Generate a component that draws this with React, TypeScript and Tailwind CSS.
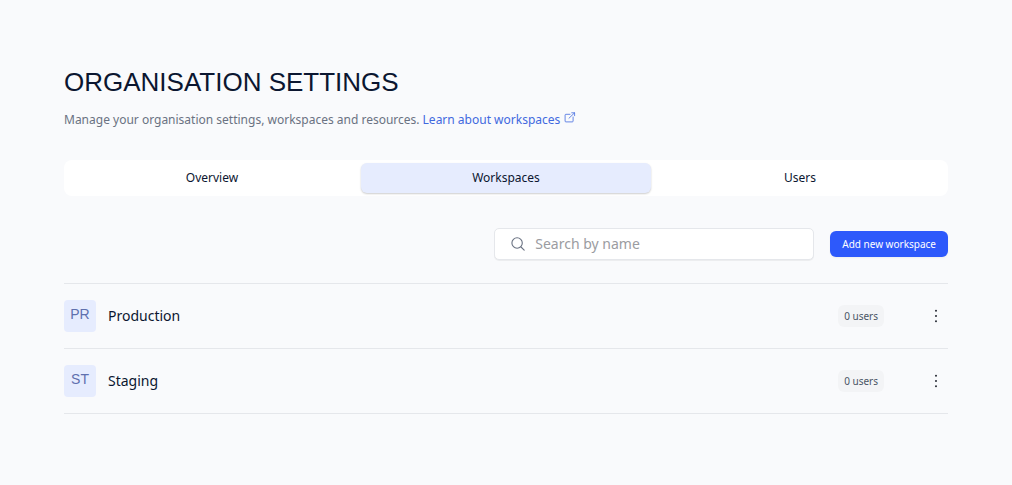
import { useState } from "react";

const tabs = ["Overview", "Workspaces", "Users"];

const workspaces = [
  { name: "Production", initials: "PR", users: 0 },
  { name: "Staging", initials: "ST", users: 0 },
];

function ExternalIcon() {
  return (
    <svg viewBox="0 0 12 12" className="mb-1 size-3 shrink-0" fill="none" stroke="currentColor" strokeWidth="0.8" strokeLinecap="round" strokeLinejoin="round" aria-hidden="true">
      <path d="M6 2.3H1.9a.8.8 0 0 0-.8.8v6a.8.8 0 0 0 .8.8h6.4a.8.8 0 0 0 .8-.8V5" />
      <path d="M5 6.2 10.6.8M7.7.8h2.9v2.9" />
    </svg>
  );
}

function SearchIcon() {
  return (
    <svg viewBox="0 0 16 16" className="size-4 shrink-0 text-gray-500" fill="none" stroke="currentColor" strokeWidth="1.1" strokeLinecap="round" aria-hidden="true">
      <circle cx="7.1" cy="7" r="5.2" />
      <path d="m11 11 3.2 3.2" />
    </svg>
  );
}

function DotsIcon() {
  return (
    <svg viewBox="0 0 16 16" className="size-4" fill="currentColor" aria-hidden="true">
      <circle cx="8" cy="2.7" r="1.05" />
      <circle cx="8" cy="8" r="1.05" />
      <circle cx="8" cy="13.3" r="1.05" />
    </svg>
  );
}

export default function App() {
  const [active, setActive] = useState("Workspaces");
  const [query, setQuery] = useState("");
  const rows = workspaces.filter((w) => w.name.toLowerCase().includes(query.toLowerCase()));

  return (
    <div className="min-h-screen bg-[#f9fafc] px-16 py-16 font-['Noto_Sans',sans-serif] text-[#0b1630]">
      <header>
        <h1 className="font-['Liberation_Sans',sans-serif] text-[26px] leading-9">ORGANISATION SETTINGS</h1>
        <p className="mt-2 flex items-center text-xs leading-6 text-gray-500">
          <span>Manage your organisation settings, workspaces and resources.</span>
          <a href="#workspaces" className="ml-[3px] flex items-center gap-1 text-[#4169df]">
            Learn about workspaces
            <ExternalIcon />
          </a>
        </p>
      </header>

      <div role="tablist" className="mt-7 grid grid-cols-3 gap-1 rounded-lg bg-white p-[3px]">
        {tabs.map((tab) => (
          <button
            key={tab}
            role="tab"
            type="button"
            aria-selected={active === tab}
            onClick={() => setActive(tab)}
            className={
              active === tab
                ? "h-[30px] rounded-md bg-[#e6ecfe] text-xs shadow-[0_1px_2px_rgba(0,0,0,0.2)]"
                : "h-[30px] rounded-md text-xs"
            }
          >
            {tab}
          </button>
        ))}
      </div>

      <div className="mt-8 flex items-center justify-end gap-4">
        <label className="flex h-8 w-80 items-center gap-[9px] rounded-[5px] border border-gray-200 bg-white px-[15px] shadow-2xs">
          <SearchIcon />
          <input
            type="text"
            aria-label="Search by name"
            placeholder="Search by name"
            value={query}
            onChange={(e) => setQuery(e.target.value)}
            className="min-w-0 flex-1 bg-transparent text-sm outline-none placeholder:text-[#9b9ca1]"
          />
        </label>
        <button type="button" className="h-[26px] rounded-md bg-[#2d59fb] px-3 text-[10px] text-white shadow-xs">
          Add new workspace
        </button>
      </div>

      <ul className="mt-[23px] border-t border-gray-200">
        {rows.map((w) => (
          <li key={w.name} className="flex items-center border-b border-gray-200 py-4">
            <span className="flex size-8 items-center justify-center rounded bg-[#e6ecfe] pb-1 font-['Liberation_Sans',sans-serif] text-sm text-[#5f70ae]">
              {w.initials}
            </span>
            <span className="ml-3 flex-1 text-sm">{w.name}</span>
            <span className="rounded-md bg-[#f3f4f6] px-[6px] py-[3px] text-[10px] leading-4 text-gray-600">
              {w.users} users
            </span>
            <button type="button" aria-label={`Actions for ${w.name}`} className="mr-1 ml-11 text-[#30343d]">
              <DotsIcon />
            </button>
          </li>
        ))}
      </ul>
    </div>
  );
}
